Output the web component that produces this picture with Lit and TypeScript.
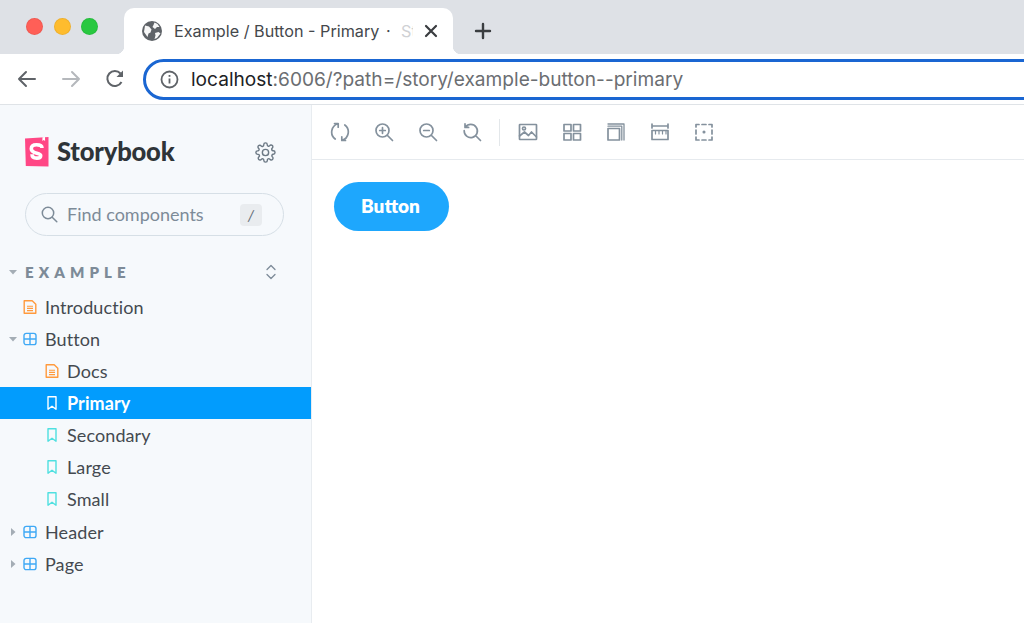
import { LitElement, html, css, svg } from "lit";
import { customElement } from "lit/decorators.js";

const doc = (c: string) => html`<svg class="ic" viewBox="0 0 14 14" fill="none" stroke="${c}" stroke-width="1.4"><path d="M1.2.8h8l3.6 3.4v9H1.2z" stroke-linejoin="round"/><path d="M4 6.2h6M4 8.4h6M4 10.6h6" stroke-width="1.1"/></svg>`;
const comp = html`<svg class="ic" viewBox="0 0 14 14" fill="none" stroke="#3fa9f5" stroke-width="1.4"><rect x="1" y="1.4" width="12" height="11.2" rx="2.2"/><path d="M7 1.4v11.2M1 7h12"/></svg>`;
const mark = (c: string) => html`<svg class="ic" viewBox="0 0 14 14" fill="none" stroke="${c}" stroke-width="1.4"><path d="M3 .8h8v12.4L7 10.2 3 13.2z" stroke-linejoin="round"/></svg>`;
const caret = (open: boolean) => html`<svg class="caret" viewBox="0 0 10 10" fill="#a4adb5">${open ? svg`<path d="M1 3h8L5 7.5z"/>` : svg`<path d="M3 1v8L7.5 5z"/>`}</svg>`;

const tool = (body: unknown) => html`<svg class="tool" viewBox="0 0 20 20" fill="none" stroke="#84919d" stroke-width="1.7" stroke-linecap="round" stroke-linejoin="round">${body}</svg>`;

const rows = [
  { label: "Introduction", icon: doc("#ff9a3d"), depth: 0 },
  { label: "Button", icon: comp, depth: 0, caret: true, open: true },
  { label: "Docs", icon: doc("#ff9a3d"), depth: 1 },
  { label: "Primary", icon: mark("#ffffff"), depth: 1, selected: true },
  { label: "Secondary", icon: mark("#4fe0e0"), depth: 1 },
  { label: "Large", icon: mark("#4fe0e0"), depth: 1 },
  { label: "Small", icon: mark("#4fe0e0"), depth: 1 },
  { label: "Header", icon: comp, depth: 0, caret: true, open: false, gap: true },
  { label: "Page", icon: comp, depth: 0, caret: true, open: false },
];

@customElement("app-root")
export class AppRoot extends LitElement {
  static styles = css`
    :host { display: block; width: 1024px; height: 623px; overflow: hidden; background: #fff; font-family: "Lato", "Noto Sans", sans-serif; }
    .tabbar { height: 54px; background: #dee1e6; display: flex; align-items: flex-end; box-sizing: border-box; }
    .lights { width: 124px; height: 54px; box-sizing: border-box; padding: 18px 0 0 26px; display: flex; gap: 10.5px; }
    .light { width: 17px; height: 17px; border-radius: 50%; box-sizing: border-box; border: 1px solid rgba(0,0,0,.06); }
    .tab { position: relative; width: 329px; height: 46px; background: #fff; border-radius: 10px 10px 0 0; display: flex; align-items: center; box-sizing: border-box; padding: 0 0 0 18px; font-family: "Inter", sans-serif; font-size: 16.2px; color: #45484c; white-space: nowrap; }
    .tab::before, .tab::after { content: ""; position: absolute; bottom: 0; width: 8px; height: 8px; background: radial-gradient(circle at var(--cx) 0, transparent 8px, #fff 8.5px); }
    .tab::before { left: -8px; --cx: 0; }
    .tab::after { right: -8px; --cx: 8px; }
    .tab-title { margin-left: 12px; width: 212px; overflow: hidden; flex: none; }
    .dot { width: 15px; text-align: left; flex: none; }
    .fade { color: #cfd1d4; width: 12px; overflow: hidden; flex: none; }
    .x { margin-left: 11px; flex: none; display: block; }
    .plus { margin: 0 0 14px 21px; display: block; }
    .navbar { height: 51px; box-sizing: border-box; border-bottom: 1px solid #dfe3e7; background: #fff; display: flex; align-items: center; padding-left: 17px; }
    .nav { display: block; flex: none; }
    .nav2 { margin-left: 24px; }
    .nav3 { margin-left: 24px; }
    .url { margin-left: 18px; flex: none; width: 920px; height: 41px; box-sizing: border-box; border: 3px solid #1a66d2; border-radius: 21px; display: flex; align-items: center; padding-left: 14px; font-family: "Inter", sans-serif; font-size: 19.1px; color: #6b6e72; white-space: nowrap; }
    .url b { font-weight: 400; color: #202124; }
    .url svg { margin-right: 12px; flex: none; }
    .main { display: flex; height: 518px; }
    .side { width: 311px; flex: none; background: #f6f9fc; border-right: 1px solid #e8ecf0; box-sizing: content-box; }
    .brand { height: 36px; margin: 29px 35px 0 24px; display: flex; align-items: center; }
    .brand-name { font-size: 25.6px; font-weight: 900; color: #2e3438; margin-left: 8px; flex: 1; letter-spacing: -0.2px; margin-bottom: 2px; }
    .search { margin: 23px 0 0 25px; width: 259px; height: 43px; box-sizing: border-box; border: 1.5px solid #d6dfe6; border-radius: 22px; display: flex; align-items: center; padding: 0 21px 0 15px; font-size: 18px; color: #7d8b98; }
    .search span { margin-left: 9px; flex: 1; margin-bottom: 2px; }
    .search kbd { width: 22px; height: 22px; border-radius: 4px; background: #e9ecef; font: 400 15px "Lato", sans-serif; color: #5f6a74; display: flex; align-items: center; justify-content: center; font-style: italic; }
    .section { height: 32px; margin-top: 20px; display: flex; align-items: center; padding: 0 34px 0 8px; font-size: 15px; font-weight: 800; letter-spacing: 5.1px; color: #7d8b98; }
    .section span { flex: 1; margin-left: 7px; }
    .list { margin-top: 3px; }
    .row { position: relative; height: 32px; display: flex; align-items: center; font-size: 18px; letter-spacing: 0.1px; font-variant-ligatures: none; color: #444a50; box-sizing: border-box; padding-left: 23px; }
    .row span { margin-bottom: 1px; }
    .row.gap { margin-top: 1px; }
    .row.d1 { padding-left: 45px; }
    .row.sel { background: #029cfd; color: #fff; font-weight: 700; }
    .row .ic { width: 14px; height: 14px; flex: none; margin-right: 8px; }
    .caret { position: absolute; left: 8px; width: 10px; height: 10px; }
    .content { flex: 1; background: #fff; }
    .tools { height: 55px; box-sizing: border-box; border-bottom: 1px solid #e6eaee; display: flex; align-items: center; padding-left: 18px; gap: 24px; }
    .tool { width: 20px; height: 20px; display: block; flex: none; }
    .sep { width: 1px; height: 27px; background: #e3e7ea; margin: 0 -6px 0 -7px; flex: none; }
    .canvas { padding: 22px; }
    .btn { width: 115px; height: 49px; border-radius: 25px; background: #1ea7fd; color: #fff; font-size: 19px; font-weight: 800; display: flex; align-items: center; justify-content: center; padding: 0 2px 2px 0; box-sizing: border-box; }
  `;

  render() {
    return html`
      <div class="tabbar">
        <div class="lights">
          <div class="light" style="background:#ff5f57"></div>
          <div class="light" style="background:#febc2e"></div>
          <div class="light" style="background:#28c840"></div>
        </div>
        <div class="tab">
          <svg width="20" height="20" viewBox="0 0 20 20"><circle cx="10" cy="10" r="10" fill="#5f6368"/><path d="M3 4.5l4 1 2.5 3-1 3-2 1-1 3.5-3.5-5zM12.5 1.5l3 1.5 2 3-2.5 0-2 2-2.5-2 1-2zM13 12l3.5-1 2 1.5-3.5 4.5-2.5 1 1-3.5z" fill="#fff" fill-opacity=".95"/></svg>
          <span class="tab-title">Example / Button - Primary</span>
          <span class="dot">·</span>
          <span class="fade">St</span>
          <svg class="x" width="14" height="14" viewBox="0 0 14 14" stroke="#3a3d40" stroke-width="2.2" stroke-linecap="round"><path d="M2 2l10 10M12 2L2 12"/></svg>
        </div>
        <svg class="plus" width="18" height="18" viewBox="0 0 18 18" stroke="#3a3d40" stroke-width="2.4" stroke-linecap="round"><path d="M9 2v14M2 9h14"/></svg>
      </div>
      <div class="navbar">
        <svg class="nav" width="20" height="20" viewBox="0 0 20 20" fill="none" stroke="#5f6368" stroke-width="2" stroke-linecap="round" stroke-linejoin="round"><path d="M18 10H2M9 3l-7 7 7 7"/></svg>
        <svg class="nav nav2" width="20" height="20" viewBox="0 0 20 20" fill="none" stroke="#b5b8bc" stroke-width="2" stroke-linecap="round" stroke-linejoin="round"><path d="M2 10h16M11 3l7 7-7 7"/></svg>
        <svg class="nav nav3" width="20" height="20" viewBox="0 0 20 20" fill="none" stroke="#5f6368" stroke-width="2" stroke-linejoin="round"><path d="M16.5 13A7.5 7.5 0 1 1 15.5 4.5"/><path d="M18 1.5v6.5h-6.5z" fill="#5f6368" stroke="none"/></svg>
        <div class="url">
          <svg width="19" height="19" viewBox="0 0 19 19" fill="none" stroke="#5f6368" stroke-width="1.8"><circle cx="9.5" cy="9.5" r="8"/><path d="M9.5 8.5v5"/><path d="M9.5 5v1.8"/></svg>
          <span><b>localhost</b>:6006/?path=/story/example-button--primary</span>
        </div>
      </div>
      <div class="main">
        <aside class="side">
          <div class="brand">
            <svg width="25" height="30" viewBox="0 0 25 30"><path d="M1 1.5 24.5 0v29.5L1.8 29z" fill="#ff4785"/><path d="M18.5 .3l-.2 3.6 1.4-1 1.4 1-.1-3.8z" fill="#fff"/><path d="M18 11c0-2-2-3.3-5.5-3.3-3.3 0-5.2 1.6-5.2 4 0 5.6 9.4 3.6 9.4 7 0 1.3-1.4 2.4-3.9 2.4-3.2 0-4.8-1.6-4.8-3.9" fill="none" stroke="#fff" stroke-width="3.6"/></svg>
            <span class="brand-name">Storybook</span>
            <svg width="21" height="21" viewBox="0 0 24 24" fill="none" stroke="#6b7884" stroke-width="1.6" stroke-linejoin="round"><circle cx="12" cy="12" r="3.6"/><path d="M19.4 15a1.6 1.6 0 0 0 .3 1.8l.1.1a2 2 0 1 1-2.8 2.8l-.1-.1a1.6 1.6 0 0 0-2.8 1.2v.2a2 2 0 1 1-4 0v-.1a1.6 1.6 0 0 0-2.7-1.2l-.1.1a2 2 0 1 1-2.8-2.8l.1-.1a1.6 1.6 0 0 0-1.2-2.8H3a2 2 0 1 1 0-4h.1a1.6 1.6 0 0 0 1.2-2.7l-.1-.1A2 2 0 1 1 7 4.5l.1.1a1.6 1.6 0 0 0 1.8.3H9a1.6 1.6 0 0 0 1-1.5V3a2 2 0 1 1 4 0v.1a1.6 1.6 0 0 0 2.7 1.2l.1-.1a2 2 0 1 1 2.8 2.8l-.1.1a1.6 1.6 0 0 0-.3 1.8V9a1.6 1.6 0 0 0 1.5 1h.2a2 2 0 1 1 0 4h-.1a1.6 1.6 0 0 0-1.4 1z"/></svg>
          </div>
          <div class="search">
            <svg width="17" height="17" viewBox="0 0 17 17" fill="none" stroke="#7d8b98" stroke-width="1.5" stroke-linecap="round"><circle cx="7" cy="7" r="5.7"/><path d="M11.2 11.2l4.6 4.6"/></svg>
            <span>Find components</span>
            <kbd>/</kbd>
          </div>
          <div class="section">
            <svg width="10" height="10" viewBox="0 0 10 10" fill="#a4adb5"><path d="M1 3h8L5 7.5z"/></svg>
            <span>EXAMPLE</span>
            <svg width="12" height="16" viewBox="0 0 12 16" fill="none" stroke="#7d8b98" stroke-width="1.3" stroke-linecap="round" stroke-linejoin="round"><path d="M2 5.5 6 1.5l4 4M2 10.5l4 4 4-4"/></svg>
          </div>
          <div class="list">
            ${rows.map((r) => html`
              <div class="row ${r.depth ? "d1" : ""} ${r.selected ? "sel" : ""} ${r.gap ? "gap" : ""}">
                ${r.caret ? caret(!!r.open) : ""}${r.icon}<span>${r.label}</span>
              </div>`)}
          </div>
        </aside>
        <section class="content">
          <div class="tools">
            ${tool(svg`<path d="M5.2 17A8.6 8.6 0 0 1 8 1.8M12 18.2A8.6 8.6 0 0 0 14.8 3M4.5 1.5H8.2V5.2M15.5 18.5h-3.7v-3.7"/>`)}
            ${tool(svg`<circle cx="8.5" cy="8.5" r="6.5"/><path d="M13.5 13.5l5 5M8.5 5.7v5.6M5.7 8.5h5.6"/>`)}
            ${tool(svg`<circle cx="8.5" cy="8.5" r="6.5"/><path d="M13.5 13.5l5 5M5.7 8.5h5.6"/>`)}
            ${tool(svg`<path d="M3.4 5.2A6.6 6.6 0 1 1 2.2 8.6M3 1.8v3.6h3.6M13.5 13.5l5 5"/>`)}
            <div class="sep"></div>
            ${tool(svg`<rect x="1.5" y="2.5" width="17" height="15" rx=".5"/><circle cx="6" cy="6.5" r="1.5"/><path d="M1.5 14l5-4 4 3.5 3-3.5 5 5"/>`)}
            ${tool(svg`<rect x="2" y="2.5" width="7" height="6.5"/><rect x="11.5" y="2.5" width="7" height="6.5"/><rect x="2" y="11.5" width="7" height="6.5"/><rect x="11.5" y="11.5" width="7" height="6.5"/>`)}
            ${tool(svg`<rect x="2" y="6.5" width="11.5" height="11.5"/><path d="M2 4.2h13.8V18M2 2h16v16" stroke-width="1.3"/>`)}
            ${tool(svg`<path d="M2 2v4M18 2v4M2 4h16"/><rect x="2" y="8.5" width="16" height="9"/><path d="M5.5 8.5v3.5M9 8.5v3.5M12.5 8.5v3.5M16 8.5v3.5" stroke-width="1.2"/>`)}
            ${tool(svg`<path d="M2 5V2.5h3M8 2.5h4M15 2.5h3V5M18 8v4M18 15v3h-3M12 18H8M5 18H2v-3M2 12V8"/><circle cx="10" cy="10" r=".7" fill="#84919d"/>`)}
          </div>
          <div class="canvas"><div class="btn">Button</div></div>
        </section>
      </div>
    `;
  }
}
